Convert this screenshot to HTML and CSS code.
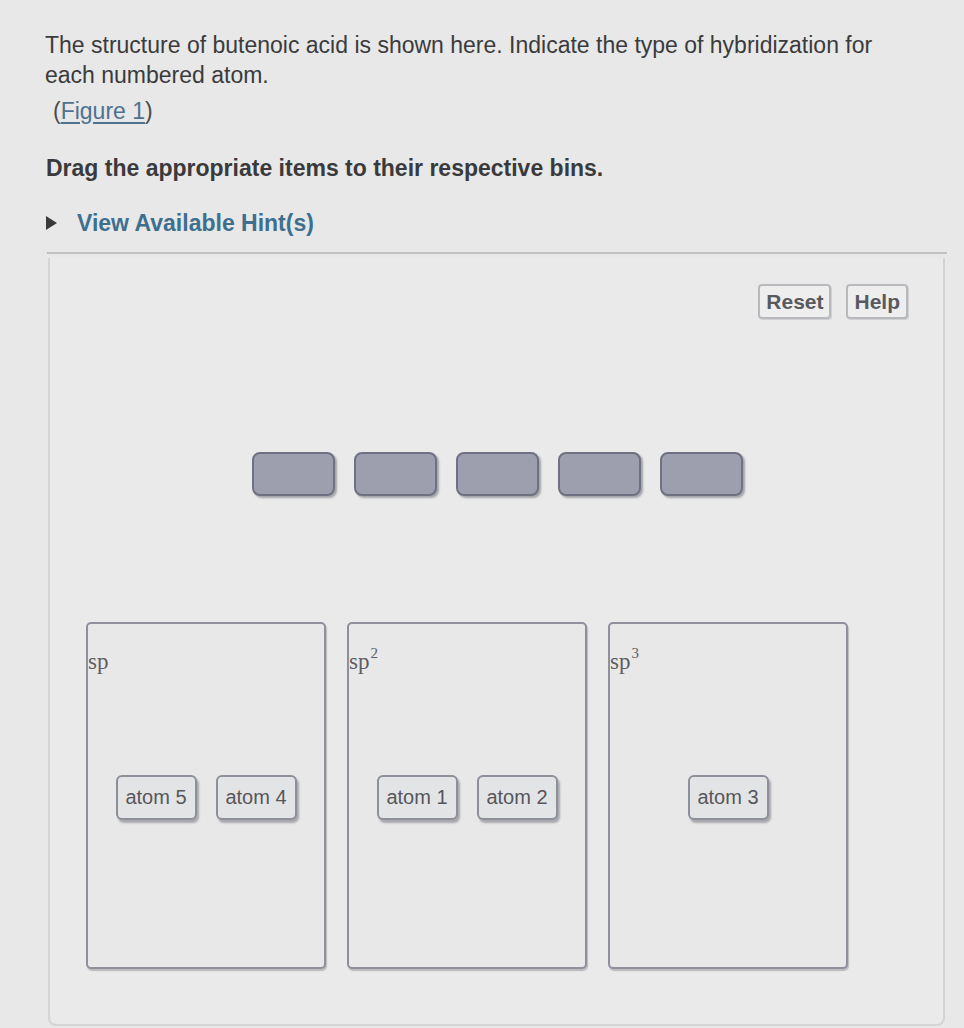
FILE: index.html
```html
<!DOCTYPE html>
<html>
<head>
<meta charset="utf-8">
<link rel="stylesheet" href="styles.css">
</head>
<body>
<div class="page">
  <p class="prompt">The structure of butenoic acid is shown here. Indicate the type of hybridization for each numbered atom.</p>
  <p class="figure">(<a href="#" class="fig-link">Figure 1</a>)</p>
  <p class="instr">Drag the appropriate items to their respective bins.</p>
  <div class="hint"><span class="tri"></span><span class="hint-text">View Available Hint(s)</span></div>
  <div class="rule"></div>
  <div class="panel">
    <div class="tools">
      <button class="tool">Reset</button>
      <button class="tool">Help</button>
    </div>
    <div class="tray">
      <div class="slot"></div>
      <div class="slot"></div>
      <div class="slot"></div>
      <div class="slot"></div>
      <div class="slot"></div>
    </div>
    <div class="bins">
      <div class="bin">
        <div class="bin-label">sp</div>
        <div class="bin-items">
          <div class="atom">atom 5</div>
          <div class="atom">atom 4</div>
        </div>
      </div>
      <div class="bin">
        <div class="bin-label">sp<sup>2</sup></div>
        <div class="bin-items">
          <div class="atom">atom 1</div>
          <div class="atom">atom 2</div>
        </div>
      </div>
      <div class="bin">
        <div class="bin-label">sp<sup>3</sup></div>
        <div class="bin-items">
          <div class="atom">atom 3</div>
        </div>
      </div>
    </div>
  </div>
</div>
</body>
</html>
```
FILE: styles.css
```css
html, body {
  margin: 0;
  padding: 0;
  background: #e7e8e7;
}
body {
  font-family: "Liberation Sans", Arial, sans-serif;
  color: #3b3b3d;
}
.page {
  width: 964px;
  height: 1028px;
  overflow: hidden;
  padding: 30px 0 0 45px;
  box-sizing: border-box;
}
.prompt {
  margin: 0;
  width: 880px;
  font-size: 23px;
  line-height: 30px;
}
.figure {
  margin: 6px 0 0 8px;
  font-size: 23px;
  line-height: 30px;
  color: #4a4a4c;
}
.fig-link {
  color: #4d7290;
  text-decoration: underline;
  text-underline-offset: 3px;
}
.instr {
  margin: 27px 0 0 1px;
  font-size: 23px;
  line-height: 30px;
  font-weight: bold;
  color: #3a3a3c;
}
.hint {
  margin-top: 25px;
  display: flex;
  align-items: center;
  height: 30px;
}
.tri {
  width: 0;
  height: 0;
  border-top: 7px solid transparent;
  border-bottom: 7px solid transparent;
  border-left: 11px solid #3a3a3c;
  margin: 0 20px 0 1px;
}
.hint-text {
  font-size: 23px;
  font-weight: bold;
  color: #3e6f8f;
}
.rule {
  margin-top: 14px;
  width: 900px;
  height: 2px;
  background: #bfc0c2;
  margin-left: 2px;
}
.panel {
  margin: 4px 0 0 3px;
  width: 897px;
  height: 768px;
  box-sizing: border-box;
  border: 2px solid #d3d4d5;
  border-top: none;
  border-radius: 0 0 8px 8px;
  background: #e9eae9;
  padding: 26px 35px 0 36px;
}
.tools {
  display: flex;
  justify-content: flex-end;
  gap: 15px;
}
.tool {
  font-family: "Liberation Sans", Arial, sans-serif;
  font-size: 21px;
  font-weight: bold;
  color: #5a5a5e;
  background: #eeeeef;
  border: 2px solid #b8b9bd;
  border-radius: 4px;
  height: 35px;
  padding: 0 6px;
  box-shadow: 1px 1px 0 #cfd0d2;
}
.tray {
  margin-top: 133px;
  display: flex;
  justify-content: center;
  gap: 19px;
}
.slot {
  width: 83px;
  height: 44px;
  box-sizing: border-box;
  background: #9d9fae;
  border: 2px solid #6f7182;
  border-radius: 8px;
  box-shadow: 2px 2px 2px rgba(80, 80, 90, 0.45);
}
.bins {
  margin-top: 126px;
  display: flex;
  gap: 21px;
}
.bin {
  width: 240px;
  height: 347px;
  box-sizing: border-box;
  border: 2px solid #8f909c;
  border-radius: 5px;
  background: #e8e8e9;
  display: flex;
  flex-direction: column;
  box-shadow: 1px 2px 1px rgba(100, 100, 110, 0.35);
}
.bin-label {
  font-family: "Liberation Serif", "Times New Roman", serif;
  font-size: 23px;
  color: #5e5e62;
  padding: 26px 0 0 0;
  line-height: 24px;
  height: 24px;
}
.bin-label sup {
  font-size: 15px;
  vertical-align: 0;
  position: relative;
  top: -11px;
  margin-left: 1px;
}
.bin-items {
  flex: 1;
  display: flex;
  justify-content: center;
  align-items: center;
  gap: 19px;
  padding-bottom: 46px;
}
.atom {
  width: 81px;
  height: 45px;
  box-sizing: border-box;
  background: #e3e4e6;
  border: 2px solid #8d8f99;
  border-radius: 6px;
  box-shadow: 2px 3px 2px rgba(90, 90, 100, 0.45);
  font-size: 20px;
  color: #56565a;
  display: flex;
  align-items: center;
  justify-content: center;
}
```
